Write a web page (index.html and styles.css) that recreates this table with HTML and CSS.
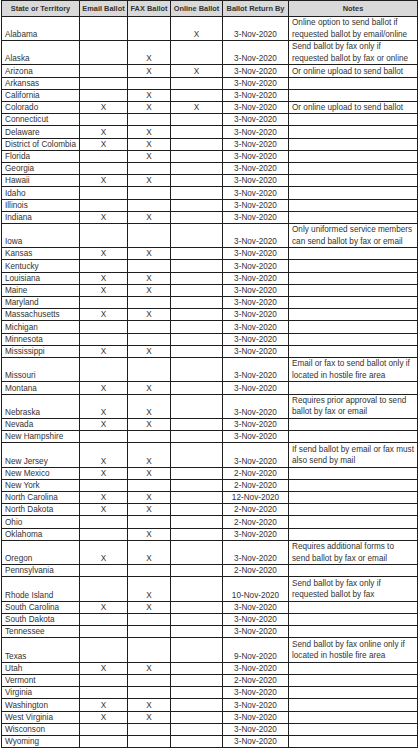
FILE: index.html
```html
<!DOCTYPE html>
<html>
<head>
<meta charset="utf-8">
<link rel="stylesheet" href="styles.css">
</head>
<body>
<div class="wrap">
<table class="t">
<colgroup>
<col class="c1"><col class="c2"><col class="c3"><col class="c4"><col class="c5"><col class="c6">
</colgroup>
<thead>
<tr class="hd"><th>State or Territory</th><th>Email Ballot</th><th>FAX Ballot</th><th>Online Ballot</th><th>Ballot Return By</th><th>Notes</th></tr>
</thead>
<tbody>
<tr class="dbl"><td class="st">Alabama</td><td class="x"></td><td class="x"></td><td class="x">X</td><td class="d">3-Nov-2020</td><td class="n">Online option to send ballot if<br>requested ballot by email/online</td></tr>
<tr class="dbl"><td class="st">Alaska</td><td class="x"></td><td class="x">X</td><td class="x"></td><td class="d">3-Nov-2020</td><td class="n">Send ballot by fax only if<br>requested ballot by fax or online</td></tr>
<tr><td class="st">Arizona</td><td class="x"></td><td class="x">X</td><td class="x">X</td><td class="d">3-Nov-2020</td><td class="n">Or online upload to send ballot</td></tr>
<tr><td class="st">Arkansas</td><td class="x"></td><td class="x"></td><td class="x"></td><td class="d">3-Nov-2020</td><td class="n"></td></tr>
<tr><td class="st">California</td><td class="x"></td><td class="x">X</td><td class="x"></td><td class="d">3-Nov-2020</td><td class="n"></td></tr>
<tr><td class="st">Colorado</td><td class="x">X</td><td class="x">X</td><td class="x">X</td><td class="d">3-Nov-2020</td><td class="n">Or online upload to send ballot</td></tr>
<tr><td class="st">Connecticut</td><td class="x"></td><td class="x"></td><td class="x"></td><td class="d">3-Nov-2020</td><td class="n"></td></tr>
<tr><td class="st">Delaware</td><td class="x">X</td><td class="x">X</td><td class="x"></td><td class="d">3-Nov-2020</td><td class="n"></td></tr>
<tr><td class="st">District of Colombia</td><td class="x">X</td><td class="x">X</td><td class="x"></td><td class="d">3-Nov-2020</td><td class="n"></td></tr>
<tr><td class="st">Florida</td><td class="x"></td><td class="x">X</td><td class="x"></td><td class="d">3-Nov-2020</td><td class="n"></td></tr>
<tr><td class="st">Georgia</td><td class="x"></td><td class="x"></td><td class="x"></td><td class="d">3-Nov-2020</td><td class="n"></td></tr>
<tr><td class="st">Hawaii</td><td class="x">X</td><td class="x">X</td><td class="x"></td><td class="d">3-Nov-2020</td><td class="n"></td></tr>
<tr><td class="st">Idaho</td><td class="x"></td><td class="x"></td><td class="x"></td><td class="d">3-Nov-2020</td><td class="n"></td></tr>
<tr><td class="st">Illinois</td><td class="x"></td><td class="x"></td><td class="x"></td><td class="d">3-Nov-2020</td><td class="n"></td></tr>
<tr><td class="st">Indiana</td><td class="x">X</td><td class="x">X</td><td class="x"></td><td class="d">3-Nov-2020</td><td class="n"></td></tr>
<tr class="dbl"><td class="st">Iowa</td><td class="x"></td><td class="x"></td><td class="x"></td><td class="d">3-Nov-2020</td><td class="n">Only uniformed service members<br>can send ballot by fax or email</td></tr>
<tr><td class="st">Kansas</td><td class="x">X</td><td class="x">X</td><td class="x"></td><td class="d">3-Nov-2020</td><td class="n"></td></tr>
<tr><td class="st">Kentucky</td><td class="x"></td><td class="x"></td><td class="x"></td><td class="d">3-Nov-2020</td><td class="n"></td></tr>
<tr><td class="st">Louisiana</td><td class="x">X</td><td class="x">X</td><td class="x"></td><td class="d">3-Nov-2020</td><td class="n"></td></tr>
<tr><td class="st">Maine</td><td class="x">X</td><td class="x">X</td><td class="x"></td><td class="d">3-Nov-2020</td><td class="n"></td></tr>
<tr><td class="st">Maryland</td><td class="x"></td><td class="x"></td><td class="x"></td><td class="d">3-Nov-2020</td><td class="n"></td></tr>
<tr><td class="st">Massachusetts</td><td class="x">X</td><td class="x">X</td><td class="x"></td><td class="d">3-Nov-2020</td><td class="n"></td></tr>
<tr><td class="st">Michigan</td><td class="x"></td><td class="x"></td><td class="x"></td><td class="d">3-Nov-2020</td><td class="n"></td></tr>
<tr><td class="st">Minnesota</td><td class="x"></td><td class="x"></td><td class="x"></td><td class="d">3-Nov-2020</td><td class="n"></td></tr>
<tr><td class="st">Mississippi</td><td class="x">X</td><td class="x">X</td><td class="x"></td><td class="d">3-Nov-2020</td><td class="n"></td></tr>
<tr class="dbl"><td class="st">Missouri</td><td class="x"></td><td class="x"></td><td class="x"></td><td class="d">3-Nov-2020</td><td class="n">Email or fax to send ballot only if<br>located in hostile fire area</td></tr>
<tr><td class="st">Montana</td><td class="x">X</td><td class="x">X</td><td class="x"></td><td class="d">3-Nov-2020</td><td class="n"></td></tr>
<tr class="dbl"><td class="st">Nebraska</td><td class="x">X</td><td class="x">X</td><td class="x"></td><td class="d">3-Nov-2020</td><td class="n">Requires prior approval to send<br>ballot by fax or email</td></tr>
<tr><td class="st">Nevada</td><td class="x">X</td><td class="x">X</td><td class="x"></td><td class="d">3-Nov-2020</td><td class="n"></td></tr>
<tr><td class="st">New Hampshire</td><td class="x"></td><td class="x"></td><td class="x"></td><td class="d">3-Nov-2020</td><td class="n"></td></tr>
<tr class="dbl"><td class="st">New Jersey</td><td class="x">X</td><td class="x">X</td><td class="x"></td><td class="d">3-Nov-2020</td><td class="n">If send ballot by email or fax must<br>also send by mail</td></tr>
<tr><td class="st">New Mexico</td><td class="x">X</td><td class="x">X</td><td class="x"></td><td class="d">2-Nov-2020</td><td class="n"></td></tr>
<tr><td class="st">New York</td><td class="x"></td><td class="x"></td><td class="x"></td><td class="d">2-Nov-2020</td><td class="n"></td></tr>
<tr><td class="st">North Carolina</td><td class="x">X</td><td class="x">X</td><td class="x"></td><td class="d">12-Nov-2020</td><td class="n"></td></tr>
<tr><td class="st">North Dakota</td><td class="x">X</td><td class="x">X</td><td class="x"></td><td class="d">2-Nov-2020</td><td class="n"></td></tr>
<tr><td class="st">Ohio</td><td class="x"></td><td class="x"></td><td class="x"></td><td class="d">2-Nov-2020</td><td class="n"></td></tr>
<tr><td class="st">Oklahoma</td><td class="x"></td><td class="x">X</td><td class="x"></td><td class="d">3-Nov-2020</td><td class="n"></td></tr>
<tr class="dbl"><td class="st">Oregon</td><td class="x">X</td><td class="x">X</td><td class="x"></td><td class="d">3-Nov-2020</td><td class="n">Requires additional forms to<br>send ballot by fax or email</td></tr>
<tr><td class="st">Pennsylvania</td><td class="x"></td><td class="x"></td><td class="x"></td><td class="d">2-Nov-2020</td><td class="n"></td></tr>
<tr class="dbl"><td class="st">Rhode Island</td><td class="x"></td><td class="x">X</td><td class="x"></td><td class="d">10-Nov-2020</td><td class="n">Send ballot by fax only if<br>requested ballot by fax</td></tr>
<tr><td class="st">South Carolina</td><td class="x">X</td><td class="x">X</td><td class="x"></td><td class="d">3-Nov-2020</td><td class="n"></td></tr>
<tr><td class="st">South Dakota</td><td class="x"></td><td class="x"></td><td class="x"></td><td class="d">3-Nov-2020</td><td class="n"></td></tr>
<tr><td class="st">Tennessee</td><td class="x"></td><td class="x"></td><td class="x"></td><td class="d">3-Nov-2020</td><td class="n"></td></tr>
<tr class="dbl"><td class="st">Texas</td><td class="x"></td><td class="x"></td><td class="x"></td><td class="d">9-Nov-2020</td><td class="n">Send ballot by fax online only if<br>located in hostile fire area</td></tr>
<tr><td class="st">Utah</td><td class="x">X</td><td class="x">X</td><td class="x"></td><td class="d">3-Nov-2020</td><td class="n"></td></tr>
<tr><td class="st">Vermont</td><td class="x"></td><td class="x"></td><td class="x"></td><td class="d">2-Nov-2020</td><td class="n"></td></tr>
<tr><td class="st">Virginia</td><td class="x"></td><td class="x"></td><td class="x"></td><td class="d">3-Nov-2020</td><td class="n"></td></tr>
<tr><td class="st">Washington</td><td class="x">X</td><td class="x">X</td><td class="x"></td><td class="d">3-Nov-2020</td><td class="n"></td></tr>
<tr><td class="st">West Virginia</td><td class="x">X</td><td class="x">X</td><td class="x"></td><td class="d">3-Nov-2020</td><td class="n"></td></tr>
<tr><td class="st">Wisconson</td><td class="x"></td><td class="x"></td><td class="x"></td><td class="d">3-Nov-2020</td><td class="n"></td></tr>
<tr><td class="st">Wyoming</td><td class="x"></td><td class="x"></td><td class="x"></td><td class="d">3-Nov-2020</td><td class="n"></td></tr>
</tbody>
</table>
</div>
</body>
</html>
```

FILE: styles.css
```css
html, body {
  margin: 0;
  padding: 0;
  background: #ffffff;
}
.wrap {
  padding: 0 0 0 1px;
}
.t {
  border-collapse: collapse;
  table-layout: fixed;
  width: 416px;
  font-family: "Liberation Sans", Arial, sans-serif;
  font-size: 8.2px;
  color: #333333;
}
.c1 { width: 78px; }
.c2 { width: 48px; }
.c3 { width: 43px; }
.c4 { width: 52px; }
.c5 { width: 66px; }
.c6 { width: 129px; }
.t th, .t td {
  border: 1px solid #1e1e1e;
  padding: 0 3px;
  line-height: 11px;
  vertical-align: bottom;
  white-space: nowrap;
  overflow: hidden;
}
.t tbody tr { height: 12.2px; }
.t tbody tr.dbl { height: 24.4px; }
.t tbody tr.dbl td.n { line-height: 11.5px; }
.hd { height: 15.7px; }
.hd th {
  background: #d9d9d9;
  font-weight: bold;
  font-size: 7.4px;
  text-align: center;
  padding: 0 0 2px;
  color: #333333;
}
.st { text-align: left; padding-left: 4px; }
.x { text-align: center; }
.d { text-align: center; }
.n { text-align: left; padding-left: 2px; }
```
